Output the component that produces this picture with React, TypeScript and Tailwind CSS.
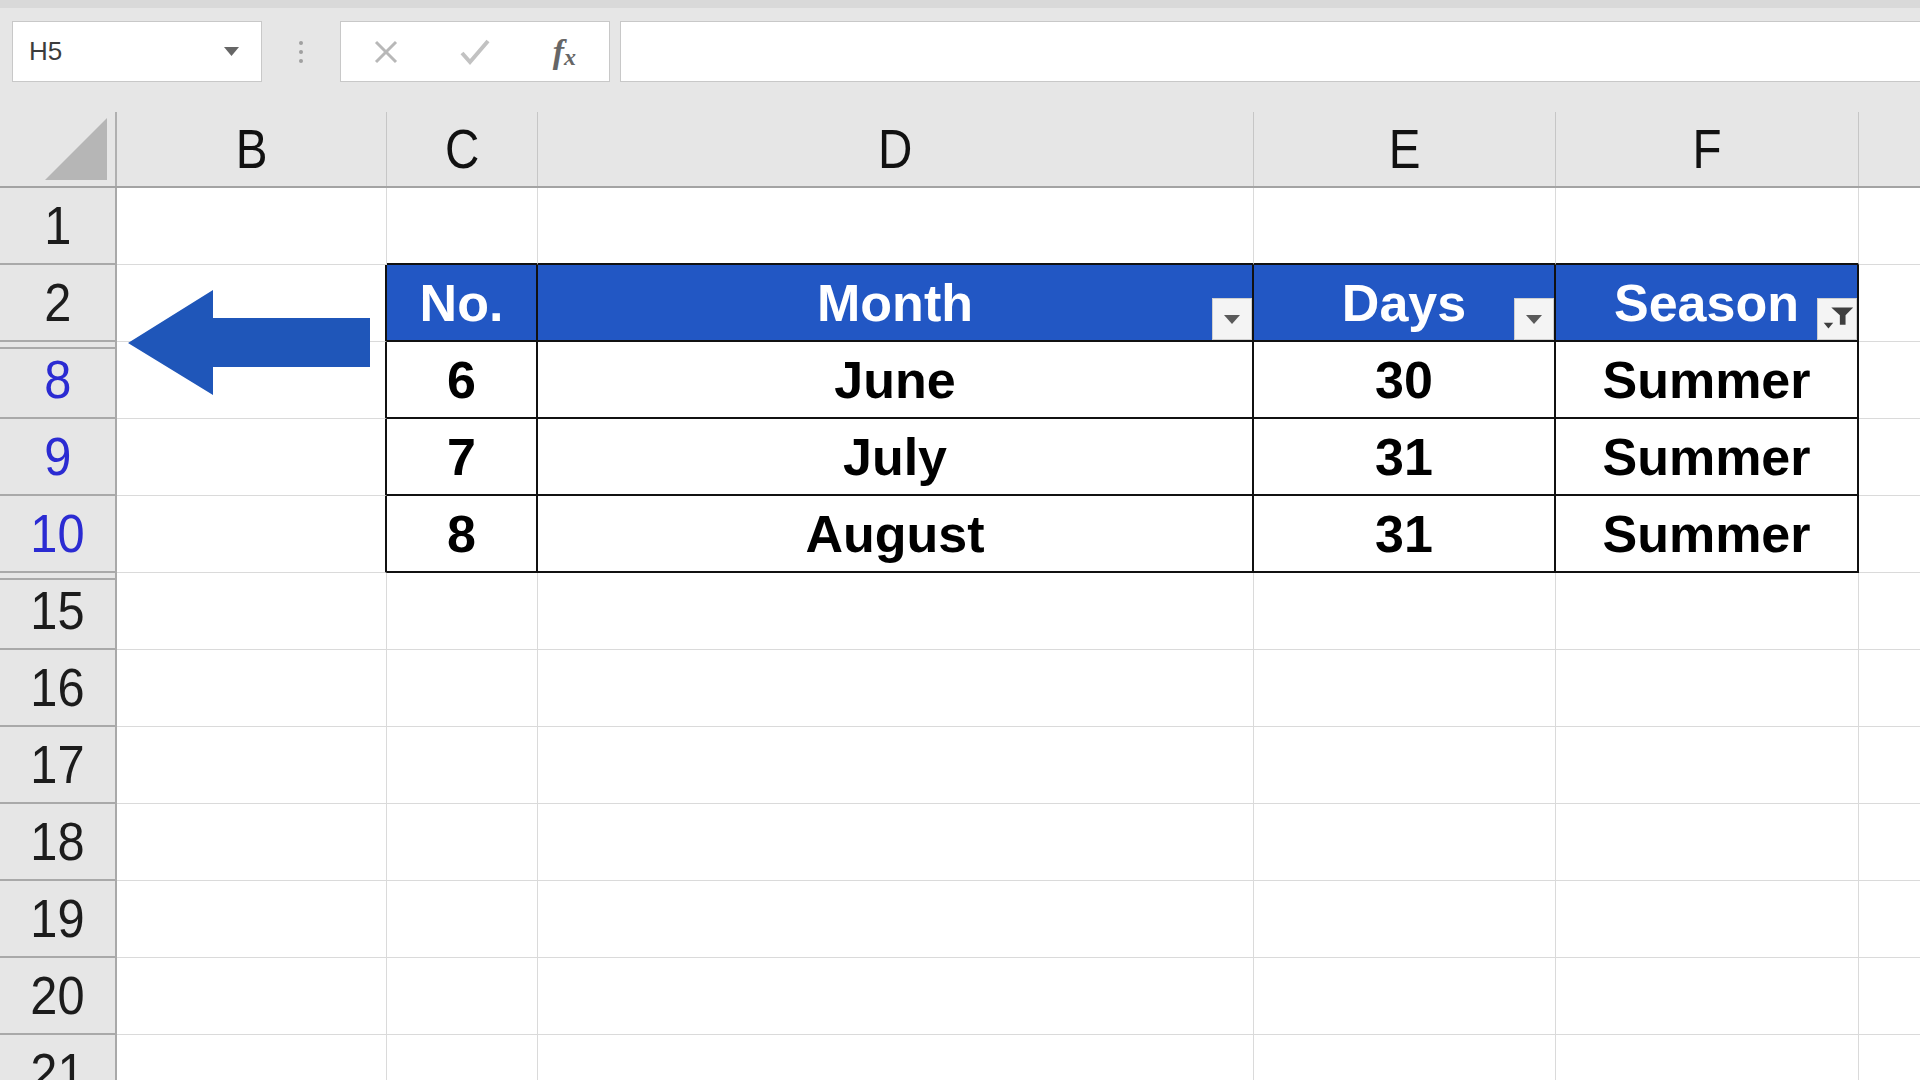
import React from "react";

type RowDef = {
  n: string;
  blue?: boolean;
  hiddenAbove?: boolean;
  kind: "empty" | "top" | "header" | "data";
  cells?: string[];
};

const rows: RowDef[] = [
  { n: "1", kind: "top" },
  { n: "2", kind: "header", cells: ["No.", "Month", "Days", "Season"] },
  { n: "8", kind: "data", blue: true, hiddenAbove: true, cells: ["6", "June", "30", "Summer"] },
  { n: "9", kind: "data", blue: true, cells: ["7", "July", "31", "Summer"] },
  { n: "10", kind: "data", blue: true, cells: ["8", "August", "31", "Summer"] },
  { n: "15", kind: "empty", hiddenAbove: true },
  { n: "16", kind: "empty" },
  { n: "17", kind: "empty" },
  { n: "18", kind: "empty" },
  { n: "19", kind: "empty" },
  { n: "20", kind: "empty" },
  { n: "21", kind: "empty" },
];

const tableWidths = ["w-[151px]", "w-[716px]", "w-[302px]", "w-[303px]"];

function FilterButton({ active }: { active?: boolean }) {
  return (
    <div className="absolute right-0 bottom-0 w-[40px] h-[42px] bg-[#f4f4f4] border border-[#cfcfcf] flex items-center justify-center">
      {active ? (
        <svg width="40" height="42" viewBox="0 0 40 42">
          <polygon points="14,9 37,9 29,17 29,27 23,27 23,17" fill="#3f3f3f" />
          <polygon points="6,25 16,25 11,31" fill="#3f3f3f" />
        </svg>
      ) : (
        <svg width="16" height="9" viewBox="0 0 16 9">
          <polygon points="0,0 16,0 8,9" fill="#5a5a5a" />
        </svg>
      )}
    </div>
  );
}

function Row({ r }: { r: RowDef }) {
  const rowHead = (
    <div
      className={`w-[117px] shrink-0 bg-[#e6e6e6] border-r-2 border-r-[#a9a9a9] border-b-2 border-b-[#a9a9a9] flex items-center justify-center text-[53px] leading-none ${
        r.blue ? "text-[#2b2bd2]" : "text-[#1c1c1c]"
      } ${r.hiddenAbove ? "shadow-[inset_0_5px_0_#e6e6e6,inset_0_7px_0_#a9a9a9]" : ""}`}
    >
      <span className="inline-block scale-x-[0.92]">{r.n}</span>
    </div>
  );

  const inTable = r.kind === "header" || r.kind === "data";

  return (
    <div className="flex h-[77px] shrink-0">
      {rowHead}
      <div
        className={`w-[270px] shrink-0 bg-white border-b border-b-[#dadada] ${
          inTable ? "border-r-2 border-r-[#111111]" : "border-r border-r-[#dadada]"
        }`}
      />
      {tableWidths.map((w, i) => {
        if (r.kind === "header") {
          return (
            <div
              key={i}
              className={`${w} shrink-0 relative bg-[#2257c4] border-r-2 border-b-2 border-[#111111] flex items-center justify-center text-white font-bold text-[52px] leading-none`}
            >
              {r.cells![i]}
              {i > 0 && <FilterButton active={i === 3} />}
            </div>
          );
        }
        if (r.kind === "data") {
          return (
            <div
              key={i}
              className={`${w} shrink-0 bg-white border-r-2 border-b-2 border-[#111111] flex items-center justify-center text-black font-bold text-[52px] leading-none`}
            >
              {r.cells![i]}
            </div>
          );
        }
        if (r.kind === "top") {
          return (
            <div
              key={i}
              className={`${w} shrink-0 bg-white border-r border-r-[#dadada] border-b-2 border-b-[#111111]`}
            />
          );
        }
        return (
          <div
            key={i}
            className={`${w} shrink-0 bg-white border-r border-b border-[#dadada]`}
          />
        );
      })}
      <div className="flex-1 bg-white border-b border-b-[#dadada]" />
    </div>
  );
}

export default function App() {
  const colHeads: { label: string; w: string }[] = [
    { label: "B", w: "w-[270px]" },
    { label: "C", w: "w-[151px]" },
    { label: "D", w: "w-[716px]" },
    { label: "E", w: "w-[302px]" },
    { label: "F", w: "w-[303px]" },
  ];

  return (
    <div className="relative w-[1920px] h-[1080px] overflow-hidden bg-[#e6e6e6] font-['Liberation_Sans',Arial,sans-serif]">
      {/* Formula bar */}
      <div className="h-[112px] border-t-[8px] border-t-[#d9d9d9] bg-[#e6e6e6] flex items-start pt-[13px]">
        <div className="ml-[12px] w-[250px] h-[61px] bg-white border border-[#c8c8c8] flex items-center justify-between pl-[16px] pr-[22px]">
          <span className="text-[26px] text-[#3c3c3c]">H5</span>
          <svg width="15" height="9" viewBox="0 0 15 9">
            <polygon points="0,0 15,0 7.5,9" fill="#666666" />
          </svg>
        </div>
        <div className="w-[78px] h-[61px] flex flex-col items-center justify-center gap-[5px]">
          <div className="w-[4px] h-[4px] rounded-full bg-[#a0a0a0]" />
          <div className="w-[4px] h-[4px] rounded-full bg-[#a0a0a0]" />
          <div className="w-[4px] h-[4px] rounded-full bg-[#a0a0a0]" />
        </div>
        <div className="w-[270px] h-[61px] bg-white border border-[#c8c8c8] flex items-center">
          <div className="w-[90px] flex justify-center">
            <svg width="26" height="26" viewBox="0 0 26 26">
              <line x1="3" y1="3" x2="23" y2="23" stroke="#b8b8b8" strokeWidth="3" />
              <line x1="23" y1="3" x2="3" y2="23" stroke="#b8b8b8" strokeWidth="3" />
            </svg>
          </div>
          <div className="w-[90px] flex justify-center">
            <svg width="32" height="28" viewBox="0 0 32 28">
              <polyline points="3,15 11,24 29,3" fill="none" stroke="#c2c2c2" strokeWidth="4" />
            </svg>
          </div>
          <div className="w-[90px] flex justify-center items-end">
            <span className="font-['Liberation_Serif',serif] italic font-bold text-[34px] text-[#666666] leading-none">
              f
            </span>
            <span className="font-['Liberation_Serif',serif] italic font-bold text-[24px] text-[#666666] leading-none">
              x
            </span>
          </div>
        </div>
        <div className="ml-[10px] flex-1 h-[61px] bg-white border border-r-0 border-[#c8c8c8]" />
      </div>

      {/* Column headers */}
      <div className="flex h-[76px] bg-[#e6e6e6] border-b-2 border-b-[#a3a3a3]">
        <div className="w-[117px] shrink-0 border-r-2 border-r-[#b0b0b0] flex items-end justify-end pb-[6px] pr-[8px]">
          <svg width="62" height="62" viewBox="0 0 62 62">
            <polygon points="62,0 62,62 0,62" fill="#b6b6b6" />
          </svg>
        </div>
        {colHeads.map((c) => (
          <div
            key={c.label}
            className={`${c.w} shrink-0 border-r border-r-[#c6c6c6] flex items-center justify-center text-[56px] leading-none text-[#111111]`}
          >
            <span className="inline-block scale-x-[0.85]">{c.label}</span>
          </div>
        ))}
        <div className="flex-1" />
      </div>

      {/* Rows */}
      <div className="flex flex-col">
        {rows.map((r) => (
          <Row key={r.n} r={r} />
        ))}
      </div>

      {/* Arrow overlay */}
      <svg
        className="absolute left-[128px] top-[290px]"
        width="244"
        height="106"
        viewBox="0 0 244 106"
      >
        <polygon points="0,53 85,0 85,28 242,28 242,77 85,77 85,105" fill="#1f56b9" />
      </svg>
    </div>
  );
}
